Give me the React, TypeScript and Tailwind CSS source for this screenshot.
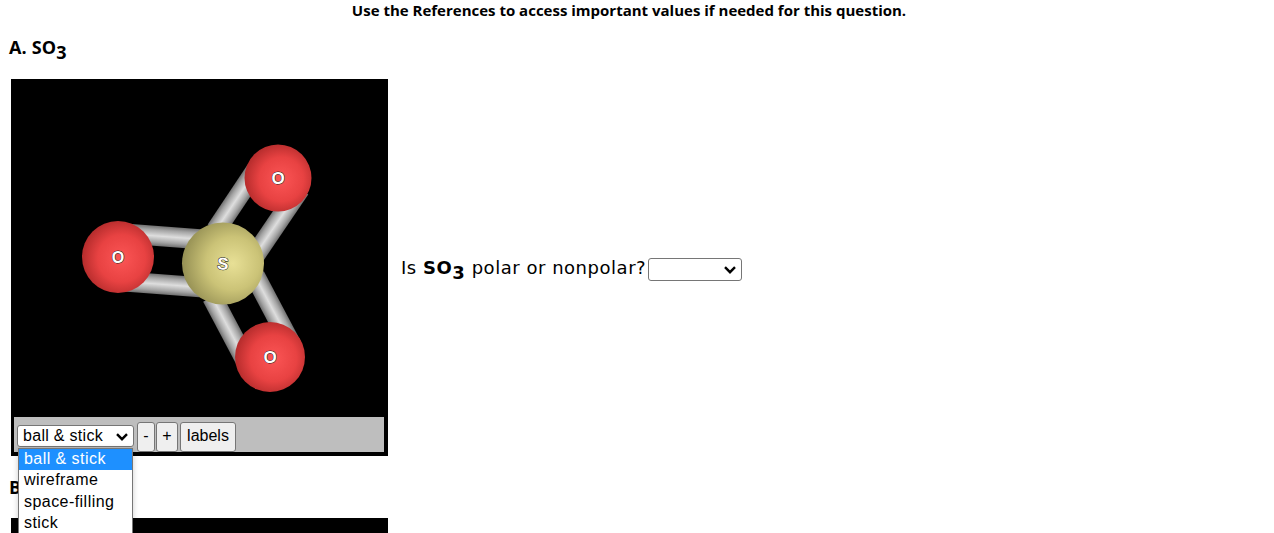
const bonds = [
  { id: "b1", x1: 118, y1: 233, x2: 223, y2: 241 },
  { id: "b2", x1: 118, y1: 281, x2: 223, y2: 289 },
  { id: "b3", x1: 216, y1: 230, x2: 256, y2: 170 },
  { id: "b4", x1: 300, y1: 189, x2: 245, y2: 270 },
  { id: "b5", x1: 212, y1: 297, x2: 248, y2: 365 },
  { id: "b6", x1: 255, y1: 276, x2: 292, y2: 346 },
];

const atoms = [
  { cx: 278, cy: 178, r: 33.5, label: "O", size: 17, tilt: 0, fill: "url(#red)" },
  { cx: 118, cy: 257, r: 36, label: "O", size: 16, tilt: 0, fill: "url(#red)" },
  { cx: 270, cy: 357, r: 35, label: "O", size: 17, tilt: 0, fill: "url(#red)" },
  { cx: 223, cy: 263.5, r: 41, label: "S", size: 17, tilt: 5, fill: "url(#sulfur)" },
];

const BOND_WIDTH = 20;

function Molecule() {
  return (
    <svg width="377" height="338" viewBox="11 79 377 338" className="block">
      <defs>
        <radialGradient id="red" cx="0.55" cy="0.52" r="0.55">
          <stop offset="0" stopColor="#fb5555" />
          <stop offset="0.6" stopColor="#e84242" />
          <stop offset="1" stopColor="#b52c2c" />
        </radialGradient>
        <radialGradient id="sulfur" cx="0.62" cy="0.5" r="0.65">
          <stop offset="0" stopColor="#e8e096" />
          <stop offset="0.5" stopColor="#cbc377" />
          <stop offset="1" stopColor="#8f8a50" />
        </radialGradient>
        {bonds.map((b) => {
          const dx = b.x2 - b.x1;
          const dy = b.y2 - b.y1;
          const len = Math.hypot(dx, dy);
          const nx = (-dy / len) * (BOND_WIDTH / 2);
          const ny = (dx / len) * (BOND_WIDTH / 2);
          return (
            <linearGradient
              key={b.id}
              id={b.id}
              gradientUnits="userSpaceOnUse"
              x1={b.x1 + nx}
              y1={b.y1 + ny}
              x2={b.x1 - nx}
              y2={b.y1 - ny}
            >
              <stop offset="0" stopColor="#707070" />
              <stop offset="0.2" stopColor="#a5a5a5" />
              <stop offset="0.5" stopColor="#dedede" />
              <stop offset="0.8" stopColor="#a5a5a5" />
              <stop offset="1" stopColor="#707070" />
            </linearGradient>
          );
        })}
      </defs>
      {bonds.map((b) => (
        <line
          key={b.id}
          x1={b.x1}
          y1={b.y1}
          x2={b.x2}
          y2={b.y2}
          stroke={`url(#${b.id})`}
          strokeWidth={BOND_WIDTH}
        />
      ))}
      {atoms.map((a) => (
        <g key={a.cx}>
          <circle cx={a.cx} cy={a.cy} r={a.r} fill={a.fill} />
          <text
            x={a.cx}
            y={a.cy + 6}
            textAnchor="middle"
            fontSize={a.size}
            fontWeight="700"
            fontFamily="'Liberation Sans', sans-serif"
            fill="#ffffff"
            stroke="#1a1a1a"
            strokeWidth="1"
            paintOrder="stroke"
            transform={`rotate(${a.tilt} ${a.cx} ${a.cy})`}
          >
            {a.label}
          </text>
        </g>
      ))}
    </svg>
  );
}

function Chevron({ className }: { className: string }) {
  return (
    <svg width="12" height="8" viewBox="0 0 12 8" className={`absolute pointer-events-none ${className}`}>
      <path d="M1 1.2 L6 6.2 L11 1.2" fill="none" stroke="#000000" strokeWidth="2.4" />
    </svg>
  );
}

function ToolButton({ children, className }: { children: React.ReactNode; className: string }) {
  return (
    <button className={`h-[30px] bg-[#efefef] border border-[#767676] rounded-[3px] text-[16px] text-black leading-none pb-[3px] ${className}`}>
      {children}
    </button>
  );
}

function Dropdown() {
  const options = ["ball & stick", "wireframe", "space-filling", "stick"];
  return (
    <div className="absolute left-[7px] top-[369px] w-[115px] bg-white border border-[#767676] shadow-[0_1px_6px_rgba(0,0,0,0.2)] text-[16px] tracking-[0.45px] text-black">
      {options.map((opt, i) => (
        <div
          key={opt}
          className={`h-[21.33px] pl-[5px] leading-[19px] whitespace-nowrap ${i === 0 ? "bg-[#1e90ff] text-white" : ""}`}
        >
          {opt}
        </div>
      ))}
    </div>
  );
}

function ViewerPanel() {
  return (
    <div className="relative w-[377px]">
      <div className="bg-black">
        <Molecule />
        <div className="pl-[3px] pr-[4px] pb-[4px]">
          <div className="h-[35px] bg-[#bebebe] flex items-start pl-[3px] pt-[5px] font-['Liberation_Sans',Arial,sans-serif]">
            <div className="relative mt-[3px] mr-[3px]">
              <select
                defaultValue="ball"
                className="block appearance-none pl-[5px] pb-[1px] w-[117px] h-[22px] bg-white border border-[#767676] rounded-[3px] text-[16px] leading-[16px] tracking-[0.3px] text-black"
              >
                <option value="ball">ball &amp; stick</option>
              </select>
              <Chevron className="right-[6px] top-[8px]" />
            </div>
            <ToolButton className="w-[18px] mr-[1px]">-</ToolButton>
            <ToolButton className="w-[22px] mr-[2px]">+</ToolButton>
            <ToolButton className="w-[56px]">labels</ToolButton>
          </div>
        </div>
      </div>
      <div className="font-['Liberation_Sans',Arial,sans-serif]">
        <Dropdown />
      </div>
    </div>
  );
}

export default function App() {
  return (
    <div className="w-[1258px] h-[533px] overflow-hidden bg-white text-black font-['Open_Sans',sans-serif]">
      <p className="text-center text-[15px] font-bold leading-[20px]">
        Use the References to access important values if needed for this question.
      </p>
      <h2 className="mt-[15px] pl-[9px] text-[18px] font-bold leading-[24px] tracking-[0.15px]">
        A. SO<sub className="text-[18px]">3</sub>
      </h2>
      <div className="mt-[20px] pl-[11px] flex items-center">
        <ViewerPanel />
        <div className="ml-[13px] flex items-center font-['DejaVu_Sans',Verdana,sans-serif] text-[18px] tracking-[0.53px]">
          <span>
            Is <strong>SO<sub className="text-[18px]">3</sub></strong> polar or nonpolar?
          </span>
          <div className="relative ml-[2px] mt-[3px]">
            <select className="block appearance-none w-[94px] h-[23px] bg-white border border-[#767676] rounded-[3px]" />
            <Chevron className="right-[6px] top-[8px]" />
          </div>
        </div>
      </div>
      <h2 className="mt-[19px] pl-[9px] text-[18px] font-bold leading-[24px]">B.</h2>
      <div className="mt-[19px] ml-[11px] w-[377px] h-[60px] bg-black" />
    </div>
  );
}
